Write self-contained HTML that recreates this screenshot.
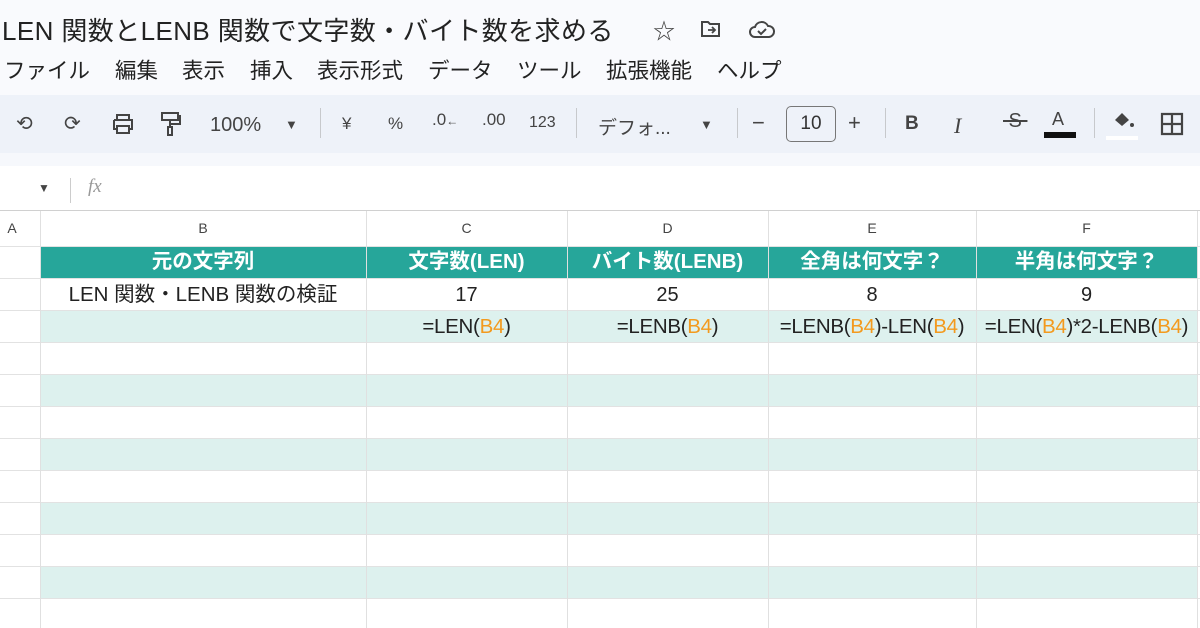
<!DOCTYPE html>
<html><head><meta charset="utf-8"><style>
*{margin:0;padding:0;box-sizing:border-box}
body{width:1200px;height:628px;overflow:hidden;background:#fff;font-family:"Liberation Sans","Noto Sans CJK JP",sans-serif;color:#222;position:relative}
.a{position:absolute;white-space:nowrap}
.top{left:0;top:0;width:1200px;height:95px;background:#f9fafd}
.tb{left:0;top:95px;width:1200px;height:58px;background:#eef2f9}
.tb2{left:0;top:153px;width:1200px;height:13px;background:#f6f8fc}
.ic{font-size:20px;color:#444;top:111px}
.sep{top:108px;width:1px;height:30px;background:#c7c9cc}
.vl{position:absolute;top:211px;width:1px;height:417px;background:#e0e0e0}
.hl{position:absolute;left:0;width:1200px;height:1px;background:#e2e2e2}
.band{position:absolute;left:40px;width:1157px;height:32px;background:#ddf1ee}
.c{position:absolute;text-align:center;font-size:20px;line-height:32px}
.h{color:#fff;font-weight:bold;font-size:20.5px}
.f{font-size:20.5px;letter-spacing:-0.3px}
.o{color:#f39a1e}
.ch{position:absolute;top:211px;height:35px;line-height:35px;text-align:center;font-size:14px;color:#444}
.m{position:absolute;top:54px;font-size:21.5px;color:#222}
</style></head><body>
<div class="a top"></div>
<div class="a" style="left:2px;top:11px;font-size:26px;letter-spacing:0.4px;color:#222">LEN 関数とLENB 関数で文字数・バイト数を求める</div>
<div class="a" style="left:653px;top:14px;font-size:22px;color:#444">☆</div>
<svg class="a" style="left:700px;top:19px" width="22" height="20" viewBox="0 0 22 20"><path d="M2 3h6l2 2h9v12H2z" fill="none" stroke="#444" stroke-width="2"/><path d="M8 11h7M12 8l3 3-3 3" fill="none" stroke="#444" stroke-width="1.8"/></svg>
<svg class="a" style="left:748px;top:18px" width="28" height="22" viewBox="0 0 28 22"><path d="M7 19a5 5 0 0 1 0-10 7 7 0 0 1 13-1 5 5 0 0 1 1 11z" fill="none" stroke="#444" stroke-width="2"/><path d="M10 13l3 3 5-5" fill="none" stroke="#444" stroke-width="2"/></svg>
<div class="m" style="left:4px">ファイル</div>
<div class="m" style="left:115px">編集</div>
<div class="m" style="left:182px">表示</div>
<div class="m" style="left:250px">挿入</div>
<div class="m" style="left:317px">表示形式</div>
<div class="m" style="left:428px">データ</div>
<div class="m" style="left:517px">ツール</div>
<div class="m" style="left:606px">拡張機能</div>
<div class="m" style="left:717px">ヘルプ</div>
<div class="a tb"></div><div class="a tb2"></div>
<div class="a ic" style="left:16px">⟲</div>
<div class="a ic" style="left:64px">⟳</div>
<svg class="a" style="left:111px;top:113px" width="24" height="22" viewBox="0 0 24 22"><path d="M6 7V2h12v5M3 7h18v9h-3M6 16H3V7M6 13h12v7H6z" fill="none" stroke="#444" stroke-width="2"/></svg>
<svg class="a" style="left:160px;top:111px" width="22" height="26" viewBox="0 0 22 26"><path d="M2 2h16v7H2zM10 9v4H20V5h-2M10 13v3M8 16h4v8H8z" fill="none" stroke="#444" stroke-width="2"/></svg>
<div class="a ic" style="left:210px;top:114px;font-size:20px">100%</div>
<div class="a" style="left:285px;top:117px;font-size:13px;color:#444">▼</div>
<div class="a sep" style="left:320px"></div>
<div class="a ic" style="left:342px;top:114px;font-size:17px">¥</div>
<div class="a ic" style="left:388px;top:114px;font-size:17px">%</div>
<div class="a ic" style="left:432px;top:110px;font-size:17px">.0<span style="font-size:12px">←</span></div>
<div class="a ic" style="left:482px;top:110px;font-size:17px">.00</div>
<div class="a ic" style="left:529px;top:114px;font-size:16px">123</div>
<div class="a sep" style="left:576px"></div>
<div class="a ic" style="left:598px;top:113px;font-size:19px">デフォ...</div>
<div class="a" style="left:700px;top:117px;font-size:13px;color:#444">▼</div>
<div class="a sep" style="left:737px"></div>
<div class="a ic" style="left:752px;top:110px;font-size:22px">−</div>
<div class="a" style="left:786px;top:106px;width:50px;height:36px;border:1.5px solid #777;border-radius:5px;text-align:center;line-height:33px;font-size:19px;color:#333">10</div>
<div class="a ic" style="left:848px;top:110px;font-size:22px">+</div>
<div class="a sep" style="left:885px"></div>
<div class="a ic" style="left:905px;top:113px;font-weight:bold;font-size:19px">B</div>
<div class="a ic" style="left:954px;top:113px;font-style:italic;font-family:'Liberation Serif',serif;font-size:22px">I</div>
<div class="a ic" style="left:1003px;top:110px;font-size:20px"><s>&nbsp;S&nbsp;</s></div>
<div class="a ic" style="left:1052px;top:109px;font-size:18px">A</div>
<div class="a" style="left:1044px;top:132px;width:32px;height:6px;background:#111"></div>
<div class="a sep" style="left:1094px"></div>
<svg class="a" style="left:1111px;top:110px" width="26" height="22" viewBox="0 0 26 22"><path d="M4 10l7-7 7 7-7 6z" fill="#444"/><circle cx="21" cy="15" r="2" fill="#444"/></svg>
<div class="a" style="left:1106px;top:136px;width:32px;height:4px;background:#fff"></div>
<svg class="a" style="left:1160px;top:112px" width="24" height="24" viewBox="0 0 24 24"><path d="M2 2h20v20H2zM12 2v20M2 12h20" fill="none" stroke="#444" stroke-width="2.2"/></svg>
<div class="a" style="left:38px;top:181px;font-size:12px;color:#444">▼</div>
<div class="a" style="left:70px;top:178px;width:1px;height:25px;background:#ccc"></div>
<div class="a" style="left:88px;top:176px;font-size:19px;color:#999;font-style:italic;font-family:'Liberation Serif',serif">fx</div>
<div class="hl" style="top:210px;background:#d0d0d0"></div>
<div class="band" style="top:310px"></div>
<div class="band" style="top:374px"></div>
<div class="band" style="top:438px"></div>
<div class="band" style="top:502px"></div>
<div class="band" style="top:566px"></div>
<div class="a" style="left:40px;top:246px;width:1157px;height:32px;background:#26a69a"></div>
<div class="hl" style="top:246px"></div><div class="hl" style="top:278px"></div><div class="hl" style="top:310px"></div><div class="hl" style="top:342px"></div><div class="hl" style="top:374px"></div><div class="hl" style="top:406px"></div><div class="hl" style="top:438px"></div><div class="hl" style="top:470px"></div><div class="hl" style="top:502px"></div><div class="hl" style="top:534px"></div><div class="hl" style="top:566px"></div><div class="hl" style="top:598px"></div>
<div class="vl" style="left:40px"></div><div class="vl" style="left:366px"></div><div class="vl" style="left:567px"></div><div class="vl" style="left:768px"></div><div class="vl" style="left:976px"></div><div class="vl" style="left:1197px"></div>
<div class="ch" style="left:0;width:24px">A</div>
<div class="ch" style="left:40px;width:326px">B</div>
<div class="ch" style="left:366px;width:201px">C</div>
<div class="ch" style="left:567px;width:201px">D</div>
<div class="ch" style="left:768px;width:208px">E</div>
<div class="ch" style="left:976px;width:221px">F</div>
<div class="c h" style="left:40px;top:246px;width:326px">元の文字列</div>
<div class="c h" style="left:366px;top:246px;width:201px">文字数(LEN)</div>
<div class="c h" style="left:567px;top:246px;width:201px">バイト数(LENB)</div>
<div class="c h" style="left:768px;top:246px;width:208px">全角は何文字？</div>
<div class="c h" style="left:976px;top:246px;width:221px">半角は何文字？</div>
<div class="c" style="left:40px;top:279px;width:326px;font-size:20.5px">LEN 関数・LENB 関数の検証</div>
<div class="c" style="left:366px;top:279px;width:201px">17</div>
<div class="c" style="left:567px;top:279px;width:201px">25</div>
<div class="c" style="left:768px;top:279px;width:208px">8</div>
<div class="c" style="left:976px;top:279px;width:221px">9</div>
<div class="c f" style="left:366px;top:311px;width:201px">=LEN(<span class="o">B4</span>)</div>
<div class="c f" style="left:567px;top:311px;width:201px">=LENB(<span class="o">B4</span>)</div>
<div class="c f" style="left:768px;top:311px;width:208px">=LENB(<span class="o">B4</span>)-LEN(<span class="o">B4</span>)</div>
<div class="c f" style="left:976px;top:311px;width:221px">=LEN(<span class="o">B4</span>)*2-LENB(<span class="o">B4</span>)</div>
</body></html>
